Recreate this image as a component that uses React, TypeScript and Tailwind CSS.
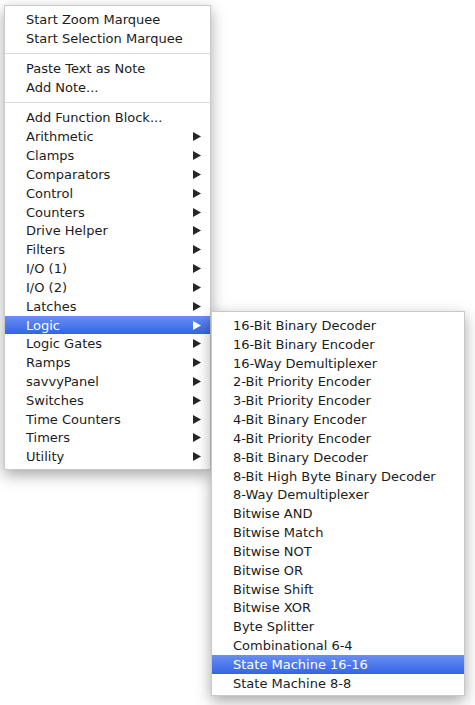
const mainTop = ["Start Zoom Marquee", "Start Selection Marquee"];
const mainNotes = ["Paste Text as Note", "Add Note..."];
const mainBlocks: { label: string; sub?: boolean }[] = [
  { label: "Add Function Block..." },
  { label: "Arithmetic", sub: true },
  { label: "Clamps", sub: true },
  { label: "Comparators", sub: true },
  { label: "Control", sub: true },
  { label: "Counters", sub: true },
  { label: "Drive Helper", sub: true },
  { label: "Filters", sub: true },
  { label: "I/O (1)", sub: true },
  { label: "I/O (2)", sub: true },
  { label: "Latches", sub: true },
  { label: "Logic", sub: true },
  { label: "Logic Gates", sub: true },
  { label: "Ramps", sub: true },
  { label: "savvyPanel", sub: true },
  { label: "Switches", sub: true },
  { label: "Time Counters", sub: true },
  { label: "Timers", sub: true },
  { label: "Utility", sub: true },
];

const logicItems = [
  "16-Bit Binary Decoder",
  "16-Bit Binary Encoder",
  "16-Way Demultiplexer",
  "2-Bit Priority Encoder",
  "3-Bit Priority Encoder",
  "4-Bit Binary Encoder",
  "4-Bit Priority Encoder",
  "8-Bit Binary Decoder",
  "8-Bit High Byte Binary Decoder",
  "8-Way Demultiplexer",
  "Bitwise AND",
  "Bitwise Match",
  "Bitwise NOT",
  "Bitwise OR",
  "Bitwise Shift",
  "Bitwise XOR",
  "Byte Splitter",
  "Combinational 6-4",
  "State Machine 16-16",
  "State Machine 8-8",
];

function Arrow({ active }: { active?: boolean }) {
  return (
    <svg width="8" height="9" viewBox="0 0 8 9" className="shrink-0">
      <path d="M0 0 L8 4.5 L0 9 Z" fill={active ? "#ffffff" : "#262626"} />
    </svg>
  );
}

function Item({
  label,
  sub,
  active,
}: {
  label: string;
  sub?: boolean;
  active?: boolean;
}) {
  return (
    <div
      className={`flex h-[18.83px] items-center justify-between pl-[21px] pr-[9px] ${
        active
          ? "bg-gradient-to-b from-[#6a8ef3] to-[#3464e6] text-white"
          : "text-[#1c1c1c]"
      }`}
    >
      <span className="whitespace-nowrap leading-none">{label}</span>
      {sub && <Arrow active={active} />}
    </div>
  );
}

function Separator() {
  return (
    <div className="flex h-[11.6px] flex-col pt-[5px]">
      <div className="h-px bg-[#d9d9d9]" />
    </div>
  );
}

export default function App() {
  return (
    <div
      className="relative h-[705px] w-[475px] overflow-hidden bg-white text-[13px]"
      style={{ fontFamily: '"DejaVu Sans", Verdana, sans-serif' }}
    >
      {/* Main context menu */}
      <div className="ml-[4px] mt-[5px] w-[207px] border border-[#c9c9c9] bg-white pb-[3px] pt-[4px] shadow-[0_5px_14px_rgba(0,0,0,0.35)]">
        {mainTop.map((l) => (
          <Item key={l} label={l} />
        ))}
        <Separator />
        {mainNotes.map((l) => (
          <Item key={l} label={l} />
        ))}
        <Separator />
        {mainBlocks.map((b) => (
          <Item key={b.label} label={b.label} sub={b.sub} active={b.label === "Logic"} />
        ))}
      </div>

      {/* Logic submenu */}
      <div className="absolute left-[211px] top-[311px] w-[254px] border border-[#c9c9c9] bg-white pb-[2px] pt-[4px] shadow-[0_5px_14px_rgba(0,0,0,0.35)]">
        {logicItems.map((l) => (
          <Item key={l} label={l} active={l === "State Machine 16-16"} />
        ))}
      </div>
    </div>
  );
}
